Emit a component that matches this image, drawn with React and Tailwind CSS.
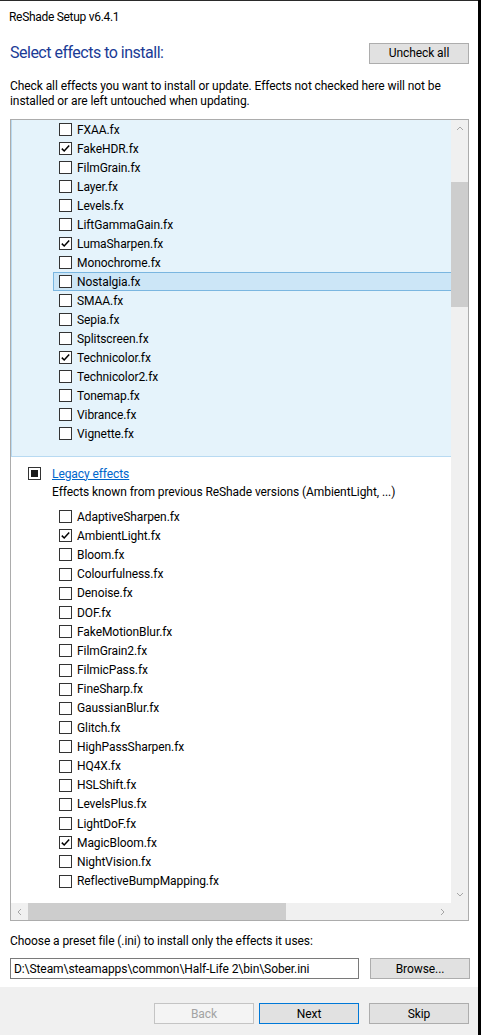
import React from "react";

const topEffects = [
  { name: "FXAA.fx" },
  { name: "FakeHDR.fx", checked: true },
  { name: "FilmGrain.fx" },
  { name: "Layer.fx" },
  { name: "Levels.fx" },
  { name: "LiftGammaGain.fx" },
  { name: "LumaSharpen.fx", checked: true },
  { name: "Monochrome.fx" },
  { name: "Nostalgia.fx", selected: true },
  { name: "SMAA.fx" },
  { name: "Sepia.fx" },
  { name: "Splitscreen.fx" },
  { name: "Technicolor.fx", checked: true },
  { name: "Technicolor2.fx" },
  { name: "Tonemap.fx" },
  { name: "Vibrance.fx" },
  { name: "Vignette.fx" },
];

const legacyEffects = [
  { name: "AdaptiveSharpen.fx" },
  { name: "AmbientLight.fx", checked: true },
  { name: "Bloom.fx" },
  { name: "Colourfulness.fx" },
  { name: "Denoise.fx" },
  { name: "DOF.fx" },
  { name: "FakeMotionBlur.fx" },
  { name: "FilmGrain2.fx" },
  { name: "FilmicPass.fx" },
  { name: "FineSharp.fx" },
  { name: "GaussianBlur.fx" },
  { name: "Glitch.fx" },
  { name: "HighPassSharpen.fx" },
  { name: "HQ4X.fx" },
  { name: "HSLShift.fx" },
  { name: "LevelsPlus.fx" },
  { name: "LightDoF.fx" },
  { name: "MagicBloom.fx", checked: true },
  { name: "NightVision.fx" },
  { name: "ReflectiveBumpMapping.fx" },
];

function Box({ checked, mixed }) {
  return (
    <span className="w-[13px] h-[13px] shrink-0 border border-[#333333] bg-white flex items-center justify-center">
      {checked && (
        <svg width="11" height="11" viewBox="0 0 11 11">
          <path d="M1.8 5.6 L4.2 8 L9.2 2.4" stroke="#000" strokeWidth="1.5" fill="none" />
        </svg>
      )}
      {mixed && <span className="w-[7px] h-[7px] bg-[#1a1a1a]" />}
    </span>
  );
}

function Chevron({ dir }) {
  const d = {
    up: "M1 5 L4 2 L7 5",
    down: "M1 2 L4 5 L7 2",
    left: "M5 1 L2 4 L5 7",
    right: "M2 1 L5 4 L2 7",
  }[dir];
  return (
    <svg width="8" height="8" viewBox="0 0 8 8">
      <path d={d} stroke="#a6a6a6" strokeWidth="1" fill="none" />
    </svg>
  );
}

function Button({ children, className = "" }) {
  return (
    <div
      className={`w-[100px] h-[21px] flex items-center justify-center border ${className}`}
    >
      {children}
    </div>
  );
}

export default function App() {
  return (
    <div className="flex w-[481px] h-[1035px] bg-black font-['Roboto',sans-serif] text-[12px] tracking-[-0.08px] text-black">
      <div className="w-[478px] flex flex-col bg-white border-t border-[#2a2a2a]">
        <div className="h-[31px] flex items-center pl-[9px] tracking-[-0.3px]">ReShade Setup v6.4.1</div>

        <div className="mt-[11px] h-[20px] flex items-center justify-between pl-[10px] pr-[9px]">
          <span className="text-[16px] tracking-[-0.5px] text-[#1a3b96]">Select effects to install:</span>
          <Button className="bg-[#e1e1e1] border-[#adadad]">Uncheck all</Button>
        </div>

        <p className="mt-[16px] pl-[10px] pr-[9px] leading-[15px]">
          Check all effects you want to install or update. Effects not checked here will not be
          installed or are left untouched when updating.
        </p>

        <div className="mt-[10px] ml-[10px] w-[459px] h-[802px] border border-[#acacac] flex flex-col">
          <div className="h-[783px] flex">
            <div className="flex-1 overflow-hidden">
              <div className="border-l border-b border-[#b8daf2] bg-[#e5f3fb] pb-[13px]">
                {topEffects.map((e) =>
                  e.selected ? (
                    <div
                      key={e.name}
                      className="h-[19px] ml-[41px] mr-[-2px] pl-[5px] flex items-center gap-[5px] border border-[#7ab6e0] bg-[#cce6f7]"
                    >
                      <Box checked={e.checked} />
                      <span>{e.name}</span>
                    </div>
                  ) : (
                    <div key={e.name} className="h-[19px] pl-[47px] flex items-center gap-[5px]">
                      <Box checked={e.checked} />
                      <span>{e.name}</span>
                    </div>
                  )
                )}
              </div>

              <div className="pt-[7px]">
                <div className="h-[19px] pl-[17px] flex items-center gap-[11px]">
                  <Box mixed />
                  <span className="text-[#0066cc] underline">Legacy effects</span>
                </div>
                <div className="h-[18px] pl-[41px] flex items-center">
                  Effects known from previous ReShade versions (AmbientLight, ...)
                </div>
                <div className="mt-[6px]">
                  {legacyEffects.map((e) => (
                    <div key={e.name} className="h-[19.2px] pl-[48px] flex items-center gap-[5px]">
                      <Box checked={e.checked} />
                      <span className="whitespace-nowrap">{e.name}</span>
                    </div>
                  ))}
                </div>
              </div>
            </div>

            <div className="w-[17px] bg-[#f0f0f0] flex flex-col">
              <div className="h-[17px] flex items-center justify-center">
                <Chevron dir="up" />
              </div>
              <div className="h-[45px]" />
              <div className="h-[125px] bg-[#cdcdcd]" />
              <div className="flex-1" />
              <div className="h-[17px] flex items-center justify-center">
                <Chevron dir="down" />
              </div>
            </div>
          </div>

          <div className="h-[17px] flex bg-[#f0f0f0]">
            <div className="w-[17px] flex items-center justify-center">
              <Chevron dir="left" />
            </div>
            <div className="w-[258px] bg-[#cdcdcd]" />
            <div className="flex-1" />
            <div className="w-[17px] flex items-center justify-center">
              <Chevron dir="right" />
            </div>
            <div className="w-[17px]" />
          </div>
        </div>

        <div className="mt-[12px] pl-[10px] leading-[16px]">
          Choose a preset file (.ini) to install only the effects it uses:
        </div>

        <div className="mt-[9px] pl-[10px] flex items-center">
          <div className="w-[349px] h-[21px] border border-[#7a7a7a] pl-[3px] flex items-center">
            D:\Steam\steamapps\common\Half-Life 2\bin\Sober.ini
          </div>
          <Button className="ml-[11px] bg-[#e1e1e1] border-[#adadad]">Browse...</Button>
        </div>

        <div className="mt-[8px] flex-1 bg-[#f0f0f0] pt-[16px] pr-[9px] flex justify-end items-start">
          <Button className="bg-[#f4f4f4] border-[#c4c4c4] text-[#a3a3a3]">Back</Button>
          <Button className="ml-[5px] bg-[#e1e1e1] border-[#0078d7]">Next</Button>
          <Button className="ml-[10px] bg-[#e1e1e1] border-[#adadad]">Skip</Button>
        </div>
      </div>
      <div className="flex-1 bg-black" />
    </div>
  );
}
